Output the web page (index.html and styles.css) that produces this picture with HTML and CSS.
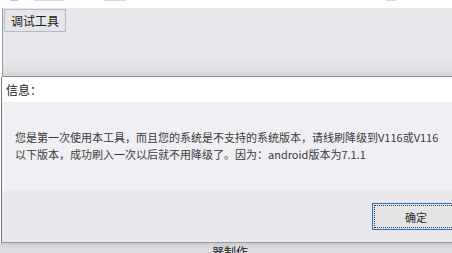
FILE: index.html
```html
<!DOCTYPE html>
<html>
<head>
<meta charset="utf-8">
<link rel="stylesheet" href="styles.css">
</head>
<body>
<div class="screen">
  <div class="topstrip">
    <span class="mark mark-a"></span>
    <span class="mark mark-b"></span>
    <span class="mark mark-c"></span>
    <span class="mark mark-d"></span>
  </div>
  <div class="app">
    <button class="tool-btn">调试工具</button>
  </div>
  <div class="dialog">
    <div class="dialog-title">信息：</div>
    <div class="dialog-body">
      <p class="msg">您是第一次使用本工具，而且您的系统是不支持的系统版本，请线刷降级到V116或V116</p>
      <p class="msg">以下版本，成功刷入一次以后就不用降级了。因为：android版本为7.1.1</p>
    </div>
    <div class="dialog-footer">
      <button class="ok-btn">确定</button>
    </div>
  </div>
  <div class="bottomstrip">
    <span class="footer-text">器制作</span>
  </div>
</div>
</body>
</html>
```

FILE: styles.css
```css
html, body {
  margin: 0;
  padding: 0;
  background: #ffffff;
}
.screen {
  width: 452px;
  height: 253px;
  overflow: hidden;
  display: flex;
  flex-direction: column;
  font-family: "Noto Sans CJK SC", "Noto Sans", sans-serif;
}
.topstrip {
  height: 8px;
  flex: none;
  background: #ffffff;
  display: flex;
  align-items: flex-start;
}
.mark {
  height: 1px;
  background: #d8d8dc;
}
.mark-a { width: 8px; margin-left: 10px; background: #b8c8e0; }
.mark-b { width: 30px; margin-left: 16px; }
.mark-c { width: 22px; margin-left: 40px; }
.mark-d { width: 10px; margin-left: 260px; }
.app {
  height: 69px;
  flex: none;
  margin-left: 2px;
  border-left: 1px solid #9a9a9a;
  border-bottom: 1px solid #8c8c8c;
  background: linear-gradient(to bottom, #e8e8ec 0px, #e8e8ec 52px, #dcdce0 64px, #d2d2d6 69px);
  box-sizing: border-box;
  padding: 1px 0 0 1px;
}
.tool-btn {
  display: block;
  width: 62px;
  height: 23px;
  padding: 0;
  margin: 0;
  border: 1px solid #a7bdd2;
  background: #e6e6e8;
  color: #1a1a1a;
  font-family: "Noto Sans CJK SC", sans-serif;
  font-size: 12px;
  line-height: 21px;
}
.dialog {
  flex: none;
  margin-left: 1px;
  width: 470px;
  border-left: 1px solid #7a7a7a;
  border-bottom: 1px solid #9a9a9a;
  display: flex;
  flex-direction: column;
}
.dialog-title {
  height: 25px;
  background: #ffffff;
  color: #1a1a1a;
  font-size: 12px;
  line-height: 25px;
  padding-left: 4px;
}
.dialog-body {
  height: 89px;
  background: #f0f0f4;
  padding: 27px 0 0 13px;
  box-sizing: border-box;
}
.msg {
  margin: 0;
  font-size: 11px;
  line-height: 17px;
  color: #3a3a3a;
  white-space: nowrap;
}
.dialog-footer {
  height: 51px;
  background: #e9e9ed;
  padding: 12px 0 0 370px;
  box-sizing: border-box;
}
.ok-btn {
  display: block;
  width: 88px;
  height: 27px;
  margin: 0;
  padding: 0;
  border: 1px solid #2b6fc4;
  outline: 1px dotted #3a3a3a;
  outline-offset: -3px;
  background: #e4e4e6;
  color: #2a2a2a;
  font-family: "Noto Sans CJK SC", sans-serif;
  font-size: 11px;
  text-align: left;
  padding-left: 32px;
}
.bottomstrip {
  flex: 1;
  background: linear-gradient(to bottom, #c8c8cc, #dadade 4px, #e2e2e6);
  padding-left: 212px;
  overflow: hidden;
}
.footer-text {
  display: block;
  font-size: 12px;
  line-height: 12px;
  margin-top: 3px;
  color: #1a1a1a;
}
```
